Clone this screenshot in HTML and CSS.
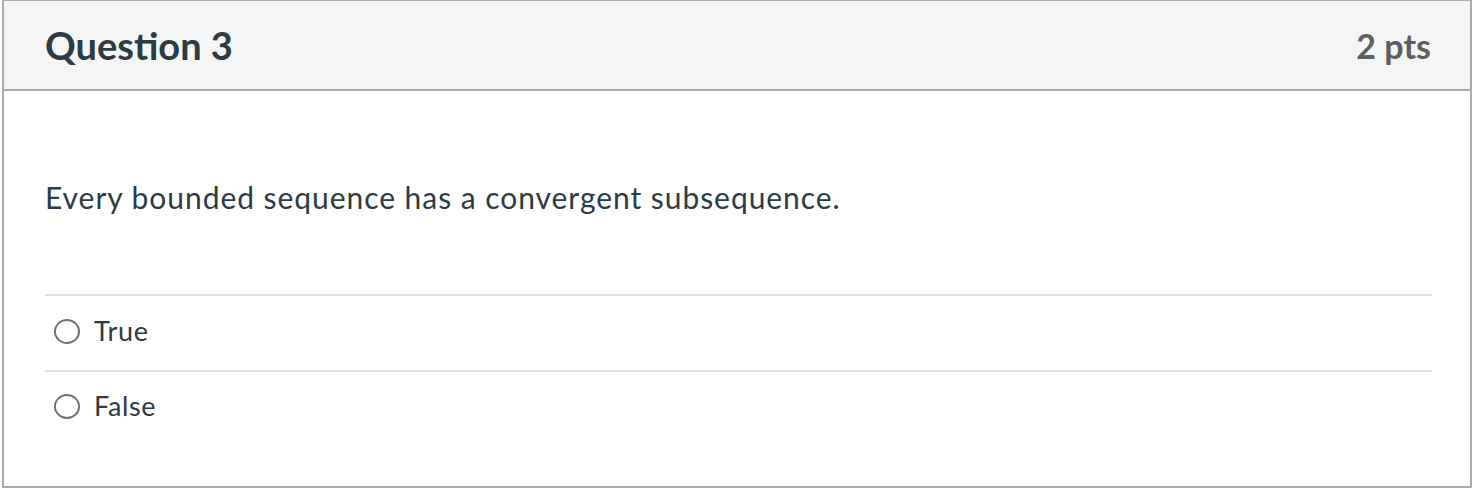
FILE: index.html
```html
<!DOCTYPE html>
<html>
<head>
<meta charset="utf-8">
<link rel="stylesheet" href="styles.css">
</head>
<body>
<div class="card">
  <div class="header">
    <h2 class="title">Question 3</h2>
    <div class="pts">2 pts</div>
  </div>
  <div class="content">
    <p class="question">Every bounded sequence has a convergent subsequence.</p>
    <div class="answers">
      <label class="answer"><span class="radio"></span><span class="label">True</span></label>
      <label class="answer"><span class="radio"></span><span class="label">False</span></label>
    </div>
  </div>
</div>
</body>
</html>
```
FILE: styles.css
```css
html, body {
  margin: 0;
  padding: 0;
  background: #fff;
}
body {
  font-family: Lato, "Noto Sans", sans-serif;
  color: #2d3b45;
}
.card {
  margin: 0 2px;
  width: 1466px;
  height: 485px;
  border: 2px solid #ababab;
  border-top-width: 1px;
  box-sizing: content-box;
}
.header {
  height: 88px;
  background: #f5f5f5;
  border-bottom: 2px solid #ababab;
  display: flex;
  align-items: center;
  justify-content: space-between;
  padding: 0 39px 0 41px;
}
.title {
  margin: 0;
  font-size: 38px;
  font-weight: 700;
  color: #2d3b45;
}
.pts {
  font-size: 34px;
  font-weight: 700;
  color: #5f5f5f;
}
.content {
  padding: 0 38px 0 41px;
}
.question {
  margin: 0;
  padding-top: 88px;
  font-size: 30px;
  letter-spacing: 0.95px;
  line-height: 36px;
  border-bottom: 2px solid #e0e0e0;
  box-sizing: border-box;
  height: 205px;
}
.answers {
  display: flex;
  flex-direction: column;
}
.answer {
  display: flex;
  align-items: center;
  height: 74px;
  box-sizing: border-box;
  padding: 0 0 4px 9px;
  gap: 14px;
  font-size: 27px;
  letter-spacing: 0.6px;
}
.answer + .answer {
  border-top: 2px solid #e0e0e0;
}
.label {
  margin-top: -2px;
}
.radio {
  width: 26px;
  height: 25px;
  border: 2px solid #717171;
  border-radius: 50%;
  box-sizing: border-box;
}
```
